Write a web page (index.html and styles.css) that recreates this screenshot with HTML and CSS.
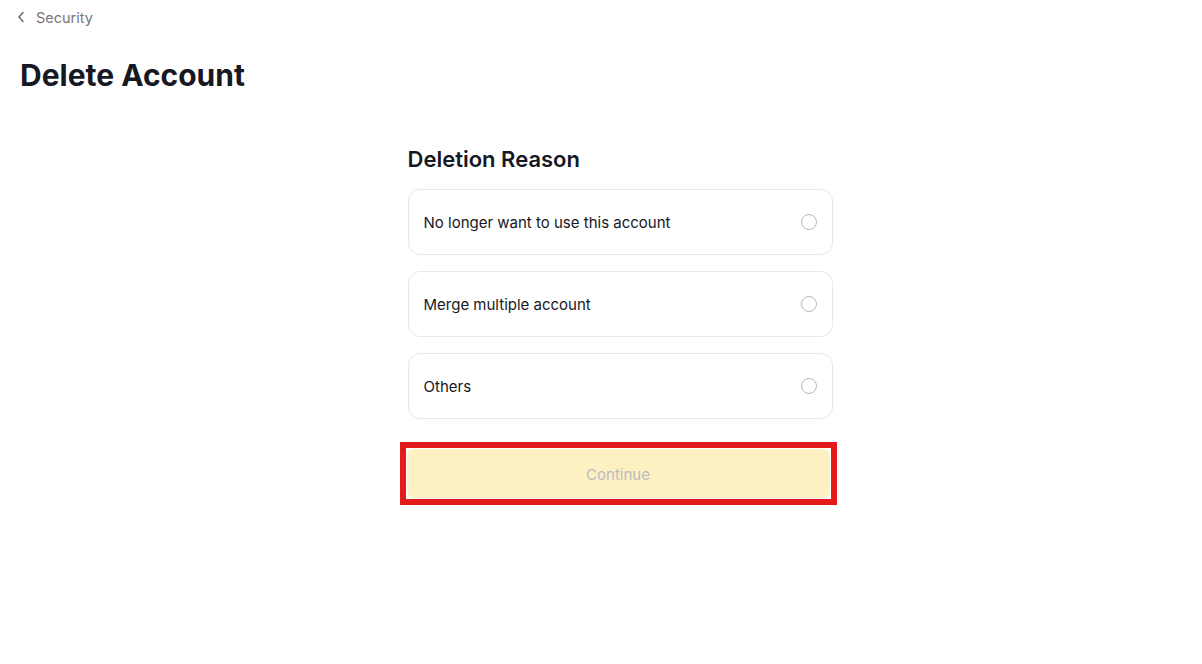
FILE: index.html
```html
<!DOCTYPE html>
<html lang="en">
<head>
  <meta charset="UTF-8">
  <meta name="viewport" content="width=device-width, initial-scale=1.0">
  <title>Delete Account</title>
  <link rel="stylesheet" href="styles.css">
</head>
<body>
  <!-- Back link -->
  <a class="back-link" href="#">
    <svg class="back-icon" width="8" height="12" viewBox="0 0 8 12">
      <path d="M6 1.5 L2 6 L6 10.5" fill="none" stroke="#666" stroke-width="1.4" stroke-linecap="round" stroke-linejoin="round"/>
    </svg>
    <span>Security</span>
  </a>

  <h1 class="page-title">Delete Account</h1>

  <main class="content">
    <!-- Reason form -->
    <div class="reason-panel">
      <h2 class="reason-title">Deletion Reason</h2>

      <label class="reason-option">
        <span>No longer want to use this account</span>
        <span class="radio"></span>
      </label>
      <label class="reason-option">
        <span>Merge multiple account</span>
        <span class="radio"></span>
      </label>
      <label class="reason-option">
        <span>Others</span>
        <span class="radio"></span>
      </label>

      <div class="highlight">
        <button class="continue-btn" disabled>Continue</button>
      </div>
    </div>
  </main>
</body>
</html>
```

FILE: styles.css
```css
body {
  margin: 0;
  font-family: Inter, "Liberation Sans", Arial, sans-serif;
  color: #161823;
  background: #fff;
}

.back-link {
  display: flex;
  align-items: center;
  gap: 11px;
  padding: 7px 0 0 17px;
  height: 20px;
  font-size: 14.5px;
  color: #75757a;
  text-decoration: none;
}

.page-title {
  margin: 30px 0 0 20px;
  font-size: 30px;
  font-weight: 700;
  line-height: 36px;
}

.content {
  padding-left: 38px;
}

.reason-panel {
  width: 425px;
  margin: 52px auto 0;
  display: flex;
  flex-direction: column;
}

.reason-title {
  margin: 0 0 16px;
  font-size: 22px;
  font-weight: 600;
  line-height: 28px;
}

.reason-option {
  display: flex;
  align-items: center;
  justify-content: space-between;
  height: 63px;
  padding: 1px 15px 0;
  margin-bottom: 16px;
  border: 1px solid #e8e8e9;
  border-radius: 12px;
  font-size: 15px;
  cursor: pointer;
}

.radio {
  width: 14px;
  height: 14px;
  border: 1px solid #b8b8bc;
  border-radius: 50%;
  margin-top: -2px;
}

/* red frame around the action button */
.highlight {
  box-sizing: border-box;
  margin: 7px 0 0 -8px;
  width: 437px;
  padding: 1px;
  border: 6px solid #e41b1b;
  background: #fff;
}

.continue-btn {
  display: block;
  width: 100%;
  height: 49px;
  padding-top: 2px;
  border: none;
  border-radius: 6px;
  background: #fdf1c3;
  color: #b9bac0;
  font-family: inherit;
  font-size: 15px;
}
```
